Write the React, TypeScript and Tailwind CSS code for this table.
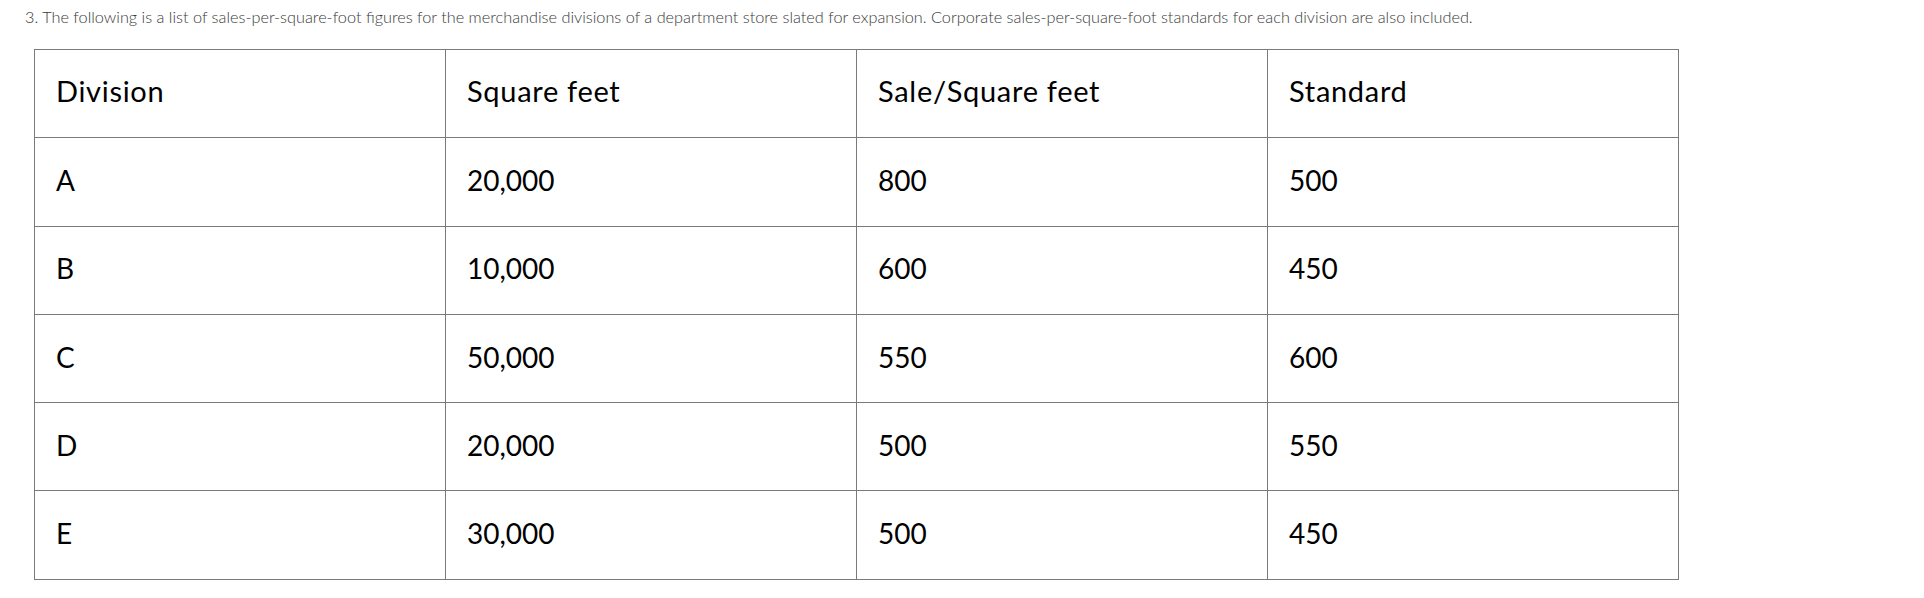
const rows = [
  ["A", "20,000", "800", "500"],
  ["B", "10,000", "600", "450"],
  ["C", "50,000", "550", "600"],
  ["D", "20,000", "500", "550"],
  ["E", "30,000", "500", "450"],
];

const headers = ["Division", "Square feet", "Sale/Square feet", "Standard"];

export default function App() {
  return (
    <div className="min-h-screen bg-white font-['Lato','Liberation_Sans',sans-serif]">
      <p className="pl-[25px] pt-[7px] text-[16.3px] leading-[20px] font-light text-[#3a3a3a]">
        3. The following is a list of sales-per-square-foot figures for the merchandise divisions of a department store slated for expansion. Corporate sales-per-square-foot standards for each division are also included.
      </p>
      <table className="ml-[34px] mt-[22px] w-[1645px] table-fixed border-collapse text-[28px] text-black">
        <thead>
          <tr className="h-[88.3px]">
            {headers.map((h) => (
              <th key={h} className="border border-[#7a7a7a] pl-[21px] pb-[5px] text-left align-middle text-[29px] tracking-[0.7px] font-normal">
                {h}
              </th>
            ))}
          </tr>
        </thead>
        <tbody>
          {rows.map((r) => (
            <tr key={r[0]} className="h-[88.3px]">
              {r.map((c, i) => (
                <td key={i} className="border border-[#7a7a7a] pl-[21px] pb-[4px] align-middle">
                  {c}
                </td>
              ))}
            </tr>
          ))}
        </tbody>
      </table>
    </div>
  );
}
